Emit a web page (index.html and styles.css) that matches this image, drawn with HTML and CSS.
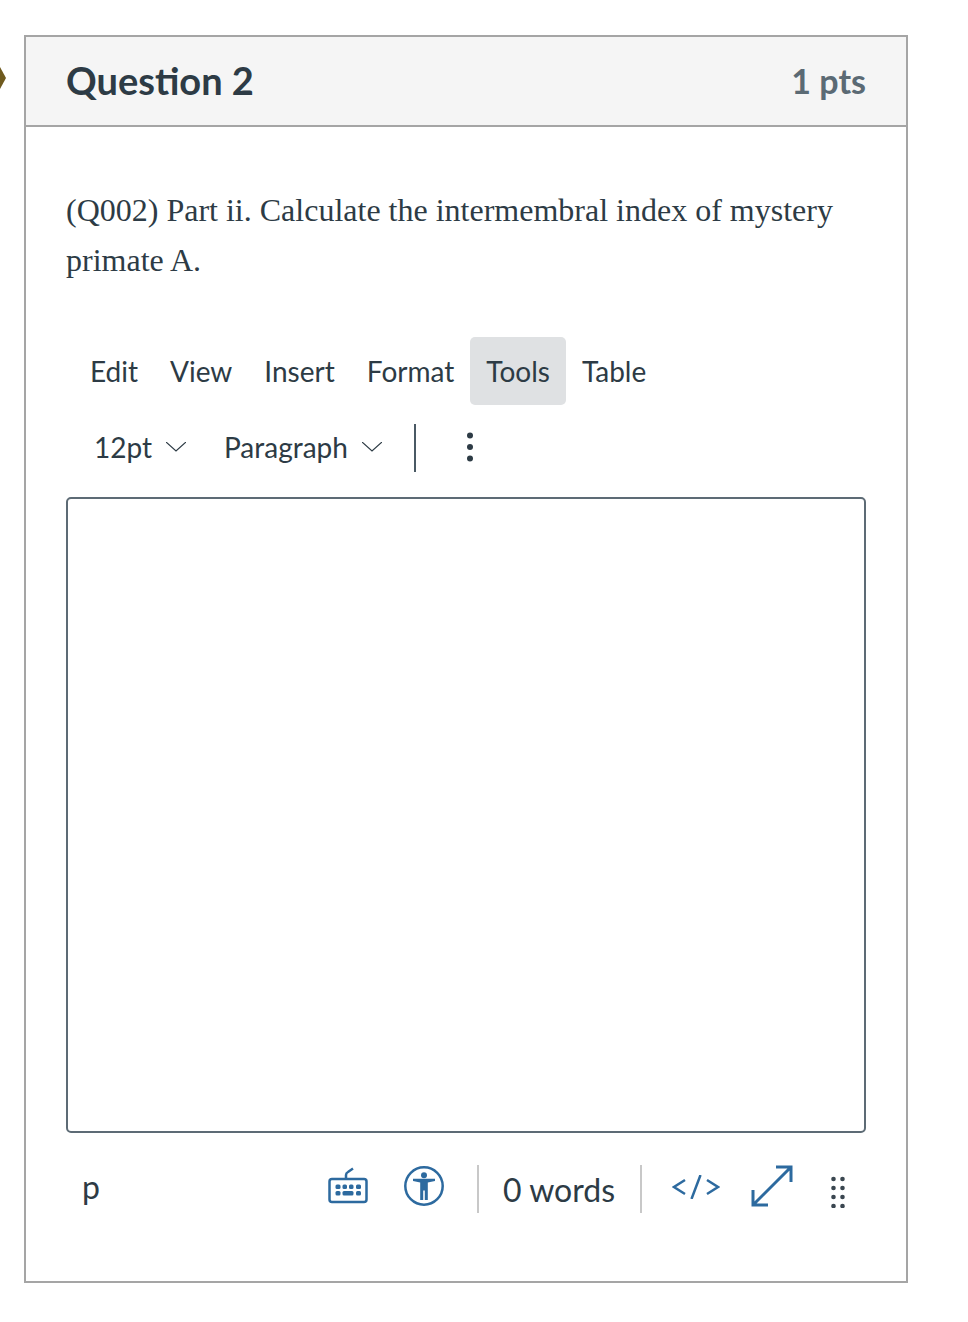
FILE: index.html
```html
<!DOCTYPE html>
<html lang="en">
<head>
<meta charset="utf-8">
<title>Question 2</title>
<link rel="stylesheet" href="styles.css">
</head>
<body>
<div class="marker"></div>
<section class="card">
  <header class="card-head">
    <h2 class="title">Question 2</h2>
    <div class="pts">1 pts</div>
  </header>
  <div class="card-body">
    <p class="question">(Q002) Part ii. Calculate the intermembral index of mystery primate A.</p>
    <nav class="menubar">
      <span class="menu">Edit</span>
      <span class="menu">View</span>
      <span class="menu">Insert</span>
      <span class="menu">Format</span>
      <span class="menu active">Tools</span>
      <span class="menu">Table</span>
    </nav>
    <div class="toolbar">
      <span class="select size">12pt
        <svg class="chev" viewBox="0 0 20 10"><path d="M0 0l10 9 10-9"/></svg>
      </span>
      <span class="select para">Paragraph
        <svg class="chev" viewBox="0 0 20 10"><path d="M0 0l10 9 10-9"/></svg>
      </span>
      <span class="tool-sep"></span>
      <svg class="more" viewBox="0 0 6 30"><circle cx="3" cy="3.500" r="3"/><circle cx="3" cy="15" r="3"/><circle cx="3" cy="26.500" r="3"/></svg>
    </div>
    <div class="editor"></div>
    <footer class="status">
      <span class="path">p</span>
      <div class="status-right">
        <svg class="ico kbd" viewBox="0 0 40 38">
          <path class="ln" d="M18 11v-3q0-2 2-3l5-3.500"/>
          <rect class="ln" x="1.500" y="12" width="37" height="23" rx="2.500"/>
          <g class="fill">
            <rect x="7.500" y="17.500" width="5" height="4.500" rx="1.500"/><rect x="14.500" y="17.500" width="4.500" height="4.500" rx="1.500"/><rect x="21" y="17.500" width="4.500" height="4.500" rx="1.500"/><rect x="28" y="17.500" width="5" height="4.500" rx="1.500"/>
            <rect x="7.500" y="24" width="5" height="4.500" rx="1.500"/><rect x="14.500" y="24" width="11" height="4.500" rx="1.500"/><rect x="28" y="24" width="5" height="4.500" rx="1.500"/>
          </g>
        </svg>
        <svg class="ico a11y" viewBox="0 0 40 40">
          <circle class="ln" cx="20" cy="20" r="18.700"/>
          <g class="fill">
            <circle cx="20" cy="9.200" r="3"/>
            <path d="M9 12.800h22v2.200l-7.200 1.500V34h-3v-9.500h-1.600V34h-3V16.500L9 15z"/>
          </g>
        </svg>
        <span class="status-sep first"></span>
        <span class="words">0 words</span>
        <span class="status-sep"></span>
        <svg class="ico code" viewBox="0 0 48 24">
          <path class="ln" d="M13 5L2 12l11 7M35 5l11 7-11 7M28.500 0l-9 24"/>
        </svg>
        <svg class="ico expand" viewBox="0 0 42 42">
          <path class="ln thick" d="M2 40L40 2M25 2h15v15M2 25v15h15"/>
        </svg>
        <svg class="grip" viewBox="0 0 14 32">
          <g><circle cx="2.500" cy="3" r="2.300"/><circle cx="11.500" cy="3" r="2.300"/><circle cx="2.500" cy="12" r="2.300"/><circle cx="11.500" cy="12" r="2.300"/><circle cx="2.500" cy="21" r="2.300"/><circle cx="11.500" cy="21" r="2.300"/><circle cx="2.500" cy="30" r="2.300"/><circle cx="11.500" cy="30" r="2.300"/></g>
        </svg>
      </div>
    </footer>
  </div>
</section>
</body>
</html>
```
FILE: styles.css
```css
* { box-sizing: border-box; }
html, body { margin: 0; padding: 0; background: #fff; }
body {
  width: 968px;
  height: 1322px;
  padding: 35px 0 0 24px;
  overflow: hidden;
  position: relative;
  font-family: Lato, "Open Sans", sans-serif;
  color: #2d3b45;
}
.marker {
  position: absolute;
  left: 0;
  top: 67px;
  width: 6px;
  height: 22px;
  background: #6f5a1e;
  clip-path: polygon(0 0, 100% 50%, 0 100%);
}
.card {
  width: 884px;
  height: 1248px;
  border: 2px solid #a5a5a5;
  display: flex;
  flex-direction: column;
}
.card-head {
  height: 90px;
  flex: none;
  background: #f5f5f5;
  border-bottom: 2px solid #a5a5a5;
  padding: 0 40px;
  display: flex;
  align-items: center;
  justify-content: space-between;
}
.title { margin: 0 0 2px; font-size: 38px; font-weight: 700; line-height: 1; }
.pts { font-size: 34px; font-weight: 700; color: #5b6a74; line-height: 1; }
.card-body { padding: 58px 40px 0; flex: 1; }
.question {
  margin: 0;
  font-family: "Liberation Serif", "Times New Roman", serif;
  font-size: 32px;
  line-height: 50px;
  color: #2d3b45;
}
.menubar { display: flex; margin-top: 52px; height: 68px; padding-left: 8px; align-items: stretch; }
.menu {
  font-size: 28px;
  padding: 0 16px;
  display: flex;
  align-items: center;
  border-radius: 5px;
}
.menu.active { background: #dfe1e3; }
.toolbar { display: flex; align-items: center; height: 92px; padding: 0 0 6px 28px; }
.select { font-size: 28px; display: flex; align-items: center; margin-bottom: 2px; }
.size { width: 130px; }
.para { width: 190px; }
.chev { width: 20px; height: 10px; margin-left: 14px; fill: none; stroke: #2d3b45; stroke-width: 1.200; }
.tool-sep { width: 2px; height: 48px; background: #4a5964; }
.more { width: 6px; height: 30px; margin: 0 0 2px 51px; fill: #2d3b45; }
.editor {
  width: 800px;
  height: 636px;
  border: 2px solid #5d6b75;
  border-radius: 5px;
}
.status { display: flex; justify-content: space-between; align-items: center; height: 112px; padding: 0 21px 0 16px; }
.path { font-size: 32px; line-height: 1; margin-bottom: 4px; }
.status-right { display: flex; align-items: center; }
.ico { display: block; flex: none; }
.ln { fill: none; stroke: #2d6a9f; stroke-width: 2.500; }
.thick { stroke-width: 3; }
.fill { fill: #2d6a9f; }
.kbd { width: 40px; height: 38px; margin-bottom: 6px; }
.a11y { width: 40px; height: 40px; margin: 0 33px 6px 36px; }
.status-sep { width: 2px; height: 48px; background: #c8c8c8; flex: none; }
.words { font-size: 32px; margin: 2px 25px 0 24px; line-height: 1; }
.code { width: 48px; height: 24px; margin: 0 0 4px 30px; }
.expand { width: 42px; height: 42px; margin: 0 0 6px 31px; }
.grip { width: 14px; height: 32px; margin: 6px 0 0 38px; fill: #3a4650; }
```
